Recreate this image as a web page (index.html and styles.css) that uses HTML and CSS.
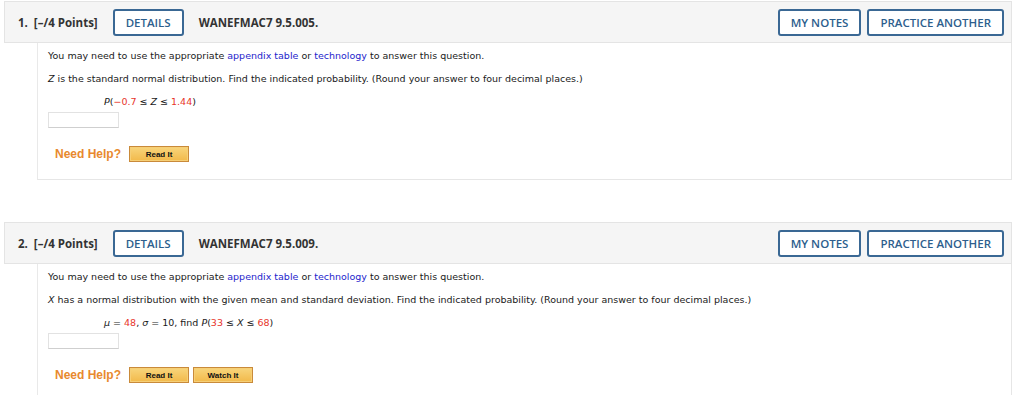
FILE: index.html
```html
<!DOCTYPE html>
<html lang="en">

<head>
    <meta charset="UTF-8">
    <title>Questions</title>
    <link rel="stylesheet" href="styles.css">
</head>

<body>
    <!-- Question 1 -->
    <div class="question first">
        <div class="q-header">
            <span class="q-num">1.</span>
            <span class="q-points">[–/4 Points]</span>
            <button class="btn details">DETAILS</button>
            <span class="q-code">WANEFMAC7 9.5.005.</span>
            <div class="q-actions">
                <button class="btn">MY NOTES</button>
                <button class="btn">PRACTICE ANOTHER</button>
            </div>
        </div>
        <div class="q-body">
            <p>You may need to use the appropriate <a href="#">appendix table</a> or <a href="#">technology</a> to answer this question.</p>
            <p><i>Z</i> is the standard normal distribution. Find the indicated probability. (Round your answer to four decimal places.)</p>
            <p class="formula"><i>P</i>(<span class="red">−0.7</span> ≤ <i>Z</i> ≤ <span class="red">1.44</span>)</p>
            <input type="text" class="answer">
            <div class="help">
                <span class="help-label">Need Help?</span>
                <button class="help-btn">Read It</button>
            </div>
        </div>
    </div>

    <!-- Question 2 -->
    <div class="question">
        <div class="q-header">
            <span class="q-num">2.</span>
            <span class="q-points">[–/4 Points]</span>
            <button class="btn details">DETAILS</button>
            <span class="q-code">WANEFMAC7 9.5.009.</span>
            <div class="q-actions">
                <button class="btn">MY NOTES</button>
                <button class="btn">PRACTICE ANOTHER</button>
            </div>
        </div>
        <div class="q-body">
            <p>You may need to use the appropriate <a href="#">appendix table</a> or <a href="#">technology</a> to answer this question.</p>
            <p><i>X</i> has a normal distribution with the given mean and standard deviation. Find the indicated probability. (Round your answer to four decimal places.)</p>
            <p class="formula"><i>μ</i> = <span class="red">48</span>, <i>σ</i> = 10, find <i>P</i>(<span class="red">33</span> ≤ <i>X</i> ≤ <span class="red">68</span>)</p>
            <input type="text" class="answer">
            <div class="help">
                <span class="help-label">Need Help?</span>
                <button class="help-btn">Read It</button>
                <button class="help-btn">Watch It</button>
            </div>
        </div>
    </div>
</body>

</html>
```

FILE: styles.css
```css
/* Reset */
* {
    margin: 0;
    padding: 0;
    box-sizing: border-box;
}

body {
    background-color: #fff;
    font-family: 'DejaVu Sans', Verdana, sans-serif;
    color: #1a1a1a;
}

/* Question block */
.question {
    width: 1008px;
    margin: 42px 0 0 4px;
}

.question.first {
    margin-top: 1px;
}

/* Header bar */
.q-header {
    display: flex;
    align-items: center;
    height: 42px;
    padding: 0 7px 0 13px;
    background-color: #f5f5f5;
    border: 1px solid #e4e4e4;
    font-family: 'Open Sans', sans-serif;
    font-size: 11.5px;
    font-weight: bold;
    color: #333;
}

.q-points {
    margin-left: 6px;
}

.q-code {
    margin-left: 15px;
}

.q-actions {
    margin-left: auto;
    display: flex;
    gap: 6px;
}

.btn {
    height: 27px;
    padding: 0 11px;
    background-color: #fff;
    border: 2px solid #3a6894;
    border-radius: 3px;
    font-family: 'Open Sans', sans-serif;
    font-size: 11.5px;
    font-weight: 600;
    color: #2d5e8d;
}

.btn.details {
    margin-left: 15px;
    width: 71px;
}

/* Question body */
.q-body {
    margin-left: 33px;
    padding: 7px 10px 17px 10px;
    border: 1px solid #e6e6e6;
    border-top: none;
    border-left-color: #e9e9e9;
    font-size: 9.5px;
    line-height: 12px;
}

.q-body p {
    margin-bottom: 11px;
}

.q-body a {
    color: #1e1ecc;
    text-decoration: none;
}

.red {
    color: #e8352b;
}

.formula {
    padding-left: 56px;
}

.q-body p.formula {
    margin-bottom: 4px;
}

.answer {
    display: block;
    width: 71px;
    height: 16px;
    border: 1px solid #e2e2e2;
    border-bottom-color: #cfcfcf;
}

/* Help row */
.help {
    display: flex;
    align-items: center;
    gap: 4px;
    margin-top: 18px;
    padding-left: 7px;
}

.help-label {
    font-family: 'Liberation Sans', Arial, sans-serif;
    font-size: 12px;
    font-weight: bold;
    color: #e8892e;
    margin-right: 4px;
}

.help-btn {
    width: 60px;
    height: 16px;
    background: linear-gradient(#f8d57c, #f2b94a);
    border: 1px solid #c98a3a;
    box-shadow: inset 0 0 0 1px #f6cf76;
    font-family: 'Liberation Sans', Arial, sans-serif;
    font-size: 8px;
    font-weight: bold;
    color: #111;
}
```
